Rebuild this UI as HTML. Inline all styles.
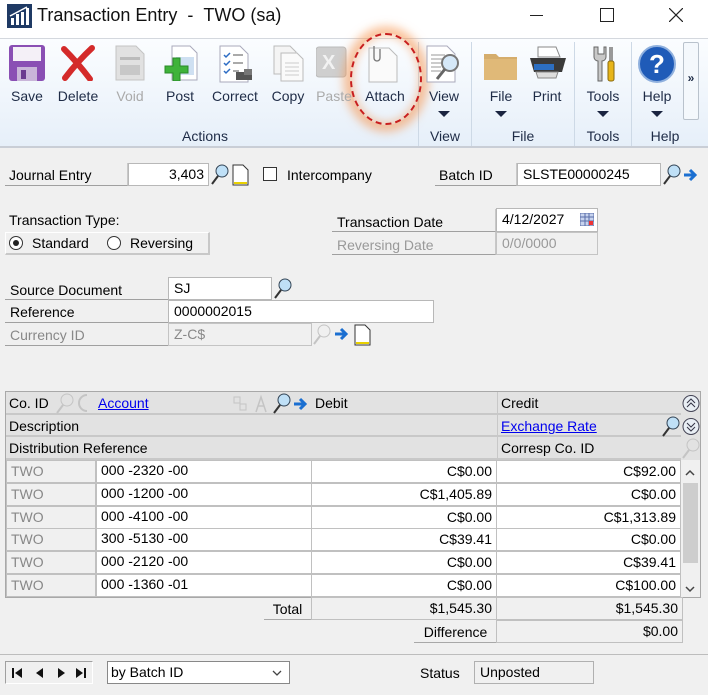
<!DOCTYPE html>
<html><head><meta charset="utf-8"><style>
*{box-sizing:border-box;margin:0;padding:0}
body{width:708px;height:695px;overflow:hidden;background:#f0f0f0;font-family:"Liberation Sans",sans-serif;position:relative;color:#000}
.a{position:absolute}
.t{font-family:"Liberation Sans Narrow","Liberation Sans",sans-serif;font-size:14px;white-space:nowrap}
.rl{position:absolute;font-size:14px;color:#1e2b46;text-align:center;white-space:nowrap}
.gl{position:absolute;top:128px;font-size:14px;color:#1e2b46;text-align:center}
.sep{position:absolute;top:42px;width:1px;height:104px;background:#cdd9e6}
.inp{position:absolute;background:#fff;border:1px solid #b8b8b8}
.lab{position:absolute;border-bottom:1px solid #a0a0a0;border-right:1px solid #c8c8c8}
.grid div{position:absolute}
.cell{border:1px solid #c0c0c0;background:#fff;font-family:"Liberation Sans Narrow","Liberation Sans",sans-serif;font-size:14px;padding:2px 4px;white-space:nowrap}
.hd{background:#e2e2e2;border-bottom:2px solid #c8c8c8;font-family:"Liberation Sans Narrow","Liberation Sans",sans-serif;font-size:14px;padding:3px 3px}
.r{text-align:right}
a{color:#0000ee}
.tri{position:absolute;width:0;height:0;border-left:6px solid transparent;border-right:6px solid transparent;border-top:6px solid #1a2440}
</style></head><body>
<!-- title bar -->
<div class="a" style="left:0;top:0;width:708px;height:38px;background:#fff"></div>
<svg class="a" style="left:7px;top:4px" width="25" height="24"><rect width="25" height="24" fill="#1f3a64"/><rect x="4" y="14" width="3" height="7" fill="#fff"/><rect x="9" y="10" width="3" height="11" fill="#fff"/><rect x="14" y="8" width="3" height="13" fill="#fff"/><rect x="19" y="4" width="3" height="17" fill="#fff"/><path d="M3 12 L20 3" stroke="#fff" stroke-width="1.5"/></svg>
<div class="a" style="left:37px;top:5px;font-size:18px;color:#111">Transaction Entry &nbsp;- &nbsp;TWO (sa)</div>
<div class="a" style="left:530px;top:15px;width:13px;height:1px;background:#222"></div>
<div class="a" style="left:600px;top:8px;width:14px;height:14px;border:1px solid #222"></div>
<svg class="a" style="left:669px;top:8px" width="14" height="14"><path d="M0 0L14 14M14 0L0 14" stroke="#222" stroke-width="1.2"/></svg>
<!-- ribbon -->
<div class="a" style="left:0;top:38px;width:708px;height:110px;background:linear-gradient(#fbfdff,#e6eff9);border-top:1px solid #d4d8de;border-bottom:2px solid #c9ced6"></div>
<div class="sep" style="left:418px"></div><div class="sep" style="left:471px"></div><div class="sep" style="left:574px"></div><div class="sep" style="left:631px"></div>
<div class="a" style="left:683px;top:42px;width:16px;height:78px;border:1px solid #b9c2cc;border-radius:2px;background:#f4f8fc;font-size:12px;font-weight:bold;color:#1e2b46;text-align:center;padding-top:28px">»</div>
<!-- icons -->
<svg class="a" style="left:9px;top:45px" width="36" height="36"><rect x="0" y="0" width="36" height="36" rx="3" fill="#8a4fb4"/><rect x="4" y="2" width="28" height="14" fill="#f4f0f7"/><rect x="8" y="22" width="20" height="14" fill="#c9b5d9"/><rect x="12" y="25" width="5" height="9" fill="#6b3b90"/></svg>
<svg class="a" style="left:60px;top:45px" width="36" height="36"><path d="M4 4 Q18 18 30 34 M32 3 Q18 16 5 33" stroke="#d42a2a" stroke-width="6" fill="none" stroke-linecap="round"/></svg>
<svg class="a" style="left:114px;top:45px" width="32" height="36"><path d="M2 1h20l8 8v26H2z" fill="#e1e1e1" stroke="#c4c4c4"/><rect x="6" y="12" width="20" height="3" fill="#bbb"/><rect x="6" y="20" width="20" height="10" fill="#c8c8c8"/></svg>
<svg class="a" style="left:164px;top:45px" width="34" height="36"><path d="M8 1h18l7 7v27H8z" fill="#fff" stroke="#aab"/><rect x="12" y="12" width="18" height="18" fill="#cfe0f2"/><path d="M1 21h8v-8h7v8h8v7h-8v8H9v-8H1z" fill="#3fb33a" stroke="#2a8a28"/></svg>
<svg class="a" style="left:218px;top:45px" width="36" height="38"><path d="M2 1h20l8 8v28H2z" fill="#fff" stroke="#aab"/><path d="M6 10l2 2 4-4M6 18l2 2 4-4M6 26l2 2 4-4" stroke="#2c6cc4" stroke-width="1.5" fill="none"/><path d="M15 10h10M15 18h10M15 26h6" stroke="#555"/><rect x="18" y="27" width="16" height="8" fill="#555"/><rect x="26" y="24" width="8" height="6" fill="#777"/></svg>
<svg class="a" style="left:272px;top:45px" width="32" height="37"><path d="M2 1h16l6 6v22H2z" fill="#f4f4f4" stroke="#bbb"/><path d="M9 8h16l6 6v22H9z" fill="#fafafa" stroke="#bbb"/><path d="M13 18h14M13 22h14M13 26h14M13 30h14" stroke="#ccc"/></svg>
<svg class="a" style="left:316px;top:45px" width="36" height="36"><rect x="0" y="2" width="30" height="30" rx="3" fill="#cfcfcf" stroke="#bbb"/><text x="6" y="24" font-size="20" fill="#f2f2f2" font-family="Liberation Sans" font-weight="bold">X</text></svg>
<!-- attach highlight -->
<div class="a" style="left:350px;top:33px;width:72px;height:92px;border-radius:50%;box-shadow:0 0 9px 7px rgba(245,150,80,.55),inset 0 0 8px 4px rgba(245,150,80,.4)"></div>
<div class="a" style="left:350px;top:33px;width:72px;height:92px;border-radius:50%;border:2px dashed #c81e1e"></div>
<svg class="a" style="left:365px;top:45px" width="36" height="38"><path d="M4 3h20l8 8v26H4z" fill="#fafafa" stroke="#bbb"/><path d="M9 1v12a3 3 0 0 0 6 0V4" stroke="#777" fill="none" stroke-width="1.3"/></svg>
<svg class="a" style="left:426px;top:45px" width="38" height="38"><path d="M1 1h20l8 8v28H1z" fill="#fff" stroke="#aab"/><path d="M5 10h14M5 14h14M5 18h10M5 22h10M5 26h10" stroke="#999"/><circle cx="24" cy="18" r="8" fill="#d5e8f8" stroke="#777" stroke-width="2"/><path d="M19 24 L11 34" stroke="#666" stroke-width="3"/></svg>
<svg class="a" style="left:484px;top:50px" width="34" height="30"><path d="M0 4h12l3 3h18v23H0z" fill="#d5ad6c"/><rect x="0" y="9" width="33" height="21" fill="#e0b978"/></svg>
<svg class="a" style="left:528px;top:46px" width="40" height="34"><path d="M10 1h18l4 10H10z" fill="#fff" stroke="#888"/><path d="M2 12h36l-4 14H6z" fill="#3a3a3a"/><rect x="6" y="18" width="20" height="6" fill="#2d6fc2"/><path d="M8 26h22l-2 6H10z" fill="#ddd" stroke="#888"/></svg>
<svg class="a" style="left:588px;top:45px" width="30" height="38"><path d="M6 2v10a4 4 0 0 0 4 4v20h4V16a4 4 0 0 0 4-4V2h-2v7h-6V2z" fill="#c8c8c8" stroke="#666"/><rect x="21" y="2" width="4" height="14" fill="#999"/><rect x="20" y="16" width="6" height="20" rx="2" fill="#e7b51a" stroke="#8a6b10"/></svg>
<svg class="a" style="left:638px;top:45px" width="38" height="38"><circle cx="19" cy="19" r="18" fill="#1f5bb8" stroke="#8fb0de" stroke-width="2"/><text x="11" y="28" font-size="26" fill="#fff" font-weight="bold" font-family="Liberation Sans">?</text></svg>
<!-- labels -->
<div class="rl" style="left:7px;top:88px;width:40px">Save</div>
<div class="rl" style="left:54px;top:88px;width:48px">Delete</div>
<div class="rl" style="left:110px;top:88px;width:40px;color:#aaa">Void</div>
<div class="rl" style="left:160px;top:88px;width:40px">Post</div>
<div class="rl" style="left:208px;top:88px;width:54px">Correct</div>
<div class="rl" style="left:268px;top:88px;width:40px">Copy</div>
<div class="rl" style="left:312px;top:88px;width:44px;color:#aaa">Paste</div>
<div class="rl" style="left:360px;top:88px;width:50px">Attach</div>
<div class="rl" style="left:424px;top:88px;width:40px">View</div>
<div class="rl" style="left:481px;top:88px;width:40px">File</div>
<div class="rl" style="left:527px;top:88px;width:40px">Print</div>
<div class="rl" style="left:580px;top:88px;width:46px">Tools</div>
<div class="rl" style="left:636px;top:88px;width:42px">Help</div>
<div class="tri" style="left:438px;top:111px"></div><div class="tri" style="left:495px;top:111px"></div><div class="tri" style="left:597px;top:111px"></div><div class="tri" style="left:651px;top:111px"></div>
<div class="gl" style="left:150px;width:110px">Actions</div>
<div class="gl" style="left:419px;width:52px">View</div>
<div class="gl" style="left:472px;width:102px">File</div>
<div class="gl" style="left:575px;width:56px">Tools</div>
<div class="gl" style="left:632px;width:66px">Help</div>
<!-- form -->
<div class="lab t" style="left:5px;top:163px;width:123px;height:23px;padding:4px 4px">Journal Entry</div>
<div class="inp t r" style="left:128px;top:163px;width:81px;height:23px;padding:2px 4px">3,403</div>
<svg class="a" style="left:210px;top:164px" width="20" height="21"><circle cx="12" cy="7" r="6" fill="#bfe0f7" stroke="#345"/><path d="M8 12L2 20" stroke="#333" stroke-width="2"/></svg>
<svg class="a" style="left:231px;top:164px" width="19" height="22"><path d="M2 1h10l5 5v15H2z" fill="#fff" stroke="#333"/><path d="M3 19h13" stroke="#e8d000" stroke-width="2"/></svg>
<div class="a" style="left:263px;top:167px;width:14px;height:14px;border:1px solid #333;background:#fff"></div>
<div class="a t" style="left:287px;top:167px">Intercompany</div>
<div class="lab t" style="left:435px;top:163px;width:82px;height:23px;padding:4px 4px">Batch ID</div>
<div class="inp t" style="left:517px;top:163px;width:144px;height:23px;padding:2px 5px">SLSTE00000245</div>
<svg class="a" style="left:662px;top:164px" width="20" height="21"><circle cx="12" cy="7" r="6" fill="#bfe0f7" stroke="#345"/><path d="M8 12L2 20" stroke="#333" stroke-width="2"/></svg>
<svg class="a" style="left:683px;top:167px" width="16" height="16"><path d="M1 8h10M7 3l5 5-5 5" stroke="#1b6fd1" stroke-width="3" fill="none"/></svg>

<div class="a t" style="left:9px;top:212px">Transaction Type:</div>
<div class="a" style="left:5px;top:232px;width:205px;height:23px;border:1px solid #a8a8a8;border-top-color:#fff;border-left-color:#fff;border-right:2px solid #c8c8c8;border-bottom:2px solid #c8c8c8"></div>
<div class="a" style="left:9px;top:236px;width:14px;height:14px;border-radius:50%;border:1px solid #333;background:#fff"></div><div class="a" style="left:13px;top:240px;width:6px;height:6px;border-radius:50%;background:#222"></div>
<div class="a t" style="left:32px;top:235px">Standard</div>
<div class="a" style="left:107px;top:236px;width:14px;height:14px;border-radius:50%;border:1px solid #333;background:#fff"></div>
<div class="a t" style="left:130px;top:235px">Reversing</div>

<div class="lab t" style="left:332px;top:209px;width:164px;height:23px;padding:5px 5px">Transaction Date</div>
<div class="inp t" style="left:496px;top:208px;width:102px;height:24px;padding:2px 5px">4/12/2027</div>
<svg class="a" style="left:580px;top:213px" width="14" height="13"><rect width="14" height="13" fill="#c7d3ee" stroke="#5a6ea8"/><path d="M0 4h14M0 8h14M5 0v13M9 0v13" stroke="#5a6ea8"/><rect x="9" y="8" width="4" height="4" fill="#e33"/></svg>
<div class="lab t" style="left:332px;top:232px;width:164px;height:23px;padding:5px 5px;color:#999">Reversing Date</div>
<div class="a t" style="left:496px;top:232px;width:102px;height:23px;padding:2px 5px;color:#999;border:1px solid #c4c4c4">0/0/0000</div>

<div class="lab t" style="left:5px;top:278px;width:164px;height:22px;padding:4px 5px">Source Document</div>
<div class="inp t" style="left:168px;top:277px;width:104px;height:23px;padding:2px 5px">SJ</div>
<svg class="a" style="left:273px;top:278px" width="20" height="21"><circle cx="12" cy="7" r="6" fill="#bfe0f7" stroke="#345"/><path d="M8 12L2 20" stroke="#333" stroke-width="2"/></svg>
<div class="lab t" style="left:5px;top:300px;width:164px;height:23px;padding:4px 5px">Reference</div>
<div class="inp t" style="left:168px;top:300px;width:266px;height:23px;padding:2px 5px">0000002015</div>
<div class="lab t" style="left:5px;top:323px;width:164px;height:23px;padding:4px 5px;color:#888">Currency ID</div>
<div class="a t" style="left:168px;top:323px;width:144px;height:23px;padding:2px 5px;color:#888;border:1px solid #c4c4c4">Z-C$</div>
<svg class="a" style="left:312px;top:324px" width="20" height="21"><circle cx="12" cy="7" r="6" fill="none" stroke="#c4c4c4"/><path d="M8 12L2 20" stroke="#c4c4c4" stroke-width="2"/></svg>
<svg class="a" style="left:334px;top:326px" width="16" height="16"><path d="M1 8h10M7 3l5 5-5 5" stroke="#1b6fd1" stroke-width="3" fill="none"/></svg>
<svg class="a" style="left:353px;top:324px" width="19" height="22"><path d="M2 1h10l5 5v15H2z" fill="#fff" stroke="#333"/><path d="M3 19h13" stroke="#e8d000" stroke-width="2"/></svg>

<!-- grid -->
<div class="grid">
<div style="left:5px;top:391px;width:696px;height:207px;border:1px solid #a8a8a8;background:#e2e2e2"></div>
<div class="hd" style="left:6px;top:392px;width:305px;height:23px">Co. ID<span style="position:absolute;left:92px;top:3px"><a href="#x" style="color:#0000ee">Account</a></span></div>
<div class="hd" style="left:311px;top:392px;width:186px;height:23px;padding-left:4px">Debit</div>
<div class="hd" style="left:497px;top:392px;width:184px;height:23px;border-left:1px solid #c8c8c8">Credit</div>
<div class="hd" style="left:6px;top:415px;width:491px;height:22px">Description</div>
<div class="hd" style="left:497px;top:415px;width:184px;height:22px;border-left:1px solid #c8c8c8"><a href="#x">Exchange Rate</a></div>
<div class="hd" style="left:6px;top:437px;width:491px;height:23px">Distribution Reference</div>
<div class="hd" style="left:497px;top:437px;width:184px;height:23px;border-left:1px solid #c8c8c8">Corresp Co. ID</div>
<div style="left:55px;top:393px"><svg width="40" height="21"><circle cx="12" cy="7" r="6" fill="none" stroke="#c4c4c4"/><path d="M8 12L2 20" stroke="#c4c4c4" stroke-width="2"/><path d="M32 2a7 7 0 0 0 0 16" stroke="#c4c4c4" fill="none" stroke-width="2"/></svg></div>
<div style="left:232px;top:394px"><svg width="40" height="20"><rect x="2" y="3" width="6" height="6" fill="none" stroke="#c4c4c4"/><rect x="8" y="10" width="6" height="6" fill="none" stroke="#c4c4c4"/><path d="M24 18l5-15 5 15M26 12h6" stroke="#c4c4c4" fill="none" stroke-width="1.5"/></svg></div>
<div style="left:272px;top:393px"><svg width="20" height="21"><circle cx="12" cy="7" r="6" fill="#bfe0f7" stroke="#345"/><path d="M8 12L2 20" stroke="#333" stroke-width="2"/></svg></div>
<div style="left:293px;top:396px"><svg width="16" height="16"><path d="M1 8h10M7 3l5 5-5 5" stroke="#1b6fd1" stroke-width="3" fill="none"/></svg></div>
<div style="left:661px;top:416px"><svg width="20" height="21"><circle cx="12" cy="7" r="6" fill="#bfe0f7" stroke="#345"/><path d="M8 12L2 20" stroke="#333" stroke-width="2"/></svg></div>
<div style="left:681px;top:438px"><svg width="20" height="21"><circle cx="12" cy="7" r="6" fill="none" stroke="#c4c4c4"/><path d="M8 12L2 20" stroke="#c4c4c4" stroke-width="2"/></svg></div>
<div style="left:682px;top:394px"><svg width="18" height="19"><circle cx="9" cy="9.5" r="8" fill="#e8eef4" stroke="#445"/><path d="M5 9l4-4 4 4M5 13l4-4 4 4" stroke="#334" fill="none"/></svg></div>
<div style="left:682px;top:417px"><svg width="18" height="19"><circle cx="9" cy="9.5" r="8" fill="#e8eef4" stroke="#445"/><path d="M5 6l4 4 4-4M5 10l4 4 4-4" stroke="#334" fill="none"/></svg></div>
<div style="left:681px;top:460px;width:19px;height:137px;background:#f0f0f0"></div>
<div style="left:683px;top:483px;width:15px;height:80px;background:#cdcdcd"></div>
<div style="left:684px;top:464px"><svg width="12" height="8"><path d="M2 6l4-4 4 4" stroke="#444" fill="none" stroke-width="1.5"/></svg></div>
<div style="left:684px;top:580px"><svg width="12" height="8"><path d="M2 2l4 4 4-4" stroke="#444" fill="none" stroke-width="1.5"/></svg></div>
</div>
<div id="rows"></div>
<script>
var d=[["000 -2320 -00","C$0.00","C$92.00"],["000 -1200 -00","C$1,405.89","C$0.00"],["000 -4100 -00","C$0.00","C$1,313.89"],["300 -5130 -00","C$39.41","C$0.00"],["000 -2120 -00","C$0.00","C$39.41"],["000 -1360 -01","C$0.00","C$100.00"]];
var h="";d.forEach(function(r,i){var y=460+i*22.8;
h+='<div class="a cell" style="left:6px;top:'+y+'px;width:90px;height:23px;color:#888;background:#f0f0f0">TWO</div>';
h+='<div class="a cell" style="left:96px;top:'+y+'px;width:216px;height:23px;padding-top:1px">'+r[0]+'</div>';
h+='<div class="a cell r" style="left:311px;top:'+y+'px;width:186px;height:23px">'+r[1]+'</div>';
h+='<div class="a cell r" style="left:496px;top:'+y+'px;width:185px;height:23px">'+r[2]+'</div>';});
document.getElementById("rows").innerHTML=h;
</script>
<div class="a t" style="left:264px;top:598px;width:47px;height:22px;border-bottom:1px solid #a8a8a8;text-align:center;padding-top:3px">Total</div>
<div class="a cell r" style="left:311px;top:597px;width:186px;height:23px;background:#f0f0f0">$1,545.30</div>
<div class="a cell r" style="left:496px;top:597px;width:187px;height:23px;background:#f0f0f0">$1,545.30</div>
<div class="a t" style="left:414px;top:620px;width:83px;height:23px;border-bottom:1px solid #a8a8a8;text-align:center;padding-top:4px">Difference</div>
<div class="a cell r" style="left:496px;top:620px;width:187px;height:23px;background:#f0f0f0">$0.00</div>
<!-- bottom bar -->
<div class="a" style="left:0;top:654px;width:708px;height:1px;background:#bdbdbd"></div>
<div class="a" style="left:5px;top:661px;width:88px;height:23px;border:1px solid #fff;border-left-color:#a0a0a0;border-top-color:#a0a0a0"></div>
<svg class="a" style="left:10px;top:665px" width="80" height="16"><rect x="2" y="3" width="2" height="10" fill="#111"/><path d="M12 3v10l-7-5z" fill="#111"/><path d="M33 3v10l-7-5z" fill="#111"/><path d="M48 3v10l7-5z" fill="#111"/><path d="M66 3v10l7-5z" fill="#111"/><rect x="74" y="3" width="2" height="10" fill="#111"/></svg>
<div class="a t" style="left:107px;top:661px;width:183px;height:23px;background:#fff;border:1px solid #888;padding:2px 3px">by Batch ID</div>
<svg class="a" style="left:271px;top:669px" width="12" height="8"><path d="M2 2l4 4 4-4" stroke="#444" fill="none" stroke-width="1.3"/></svg>
<div class="a t" style="left:420px;top:665px">Status</div>
<div class="a t" style="left:474px;top:661px;width:120px;height:23px;border:1px solid #b0b0b0;padding:2px 5px">Unposted</div>
</body></html>
